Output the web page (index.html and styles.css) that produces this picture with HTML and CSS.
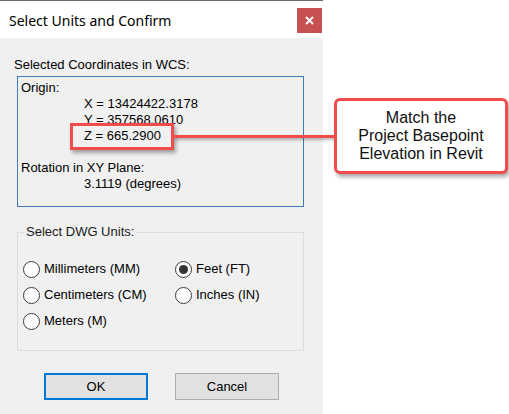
FILE: index.html
```html
<!DOCTYPE html>
<html>
<head>
<meta charset="utf-8">
<link rel="stylesheet" href="styles.css">
</head>
<body>
<div class="page">
  <div class="dialog">
    <div class="titlebar">
      <span class="title">Select Units and Confirm</span>
      <div class="close">
        <svg width="9" height="9" viewBox="0 0 9 9"><path d="M1 1 L8 8 M8 1 L1 8" stroke="#fff" stroke-width="2" fill="none"/></svg>
      </div>
    </div>
    <div class="body">
      <div class="section-label">Selected Coordinates in WCS:</div>
      <div class="coords">
        <div>Origin:</div>
        <div class="indent">X = 13424422.3178</div>
        <div class="indent">Y = 357568.0610</div>
        <div class="indent">Z = 665.2900</div>
        <div class="spacer"></div>
        <div>Rotation in XY Plane:</div>
        <div class="indent">3.1119 (degrees)</div>
      </div>
      <fieldset class="units">
        <legend>Select DWG Units:</legend>
        <div class="radio-grid">
          <label class="radio"><span class="dot"></span>Millimeters (MM)</label>
          <label class="radio"><span class="dot checked"></span>Feet (FT)</label>
          <label class="radio"><span class="dot"></span>Centimeters (CM)</label>
          <label class="radio"><span class="dot"></span>Inches (IN)</label>
          <label class="radio"><span class="dot"></span>Meters (M)</label>
        </div>
      </fieldset>
      <div class="buttons">
        <div class="btn default">OK</div>
        <div class="btn">Cancel</div>
      </div>
    </div>
  </div>
  <div class="highlight"></div>
  <div class="connector"></div>
  <div class="callout">Match the<br>Project Basepoint<br>Elevation in Revit</div>
</div>
</body>
</html>
```
FILE: styles.css
```css
* { box-sizing: border-box; }
html, body { margin: 0; padding: 0; background: #fff; }
body {
  font-family: "Liberation Sans", Arial, sans-serif;
  font-size: 13px;
  color: #000;
}
.page {
  position: relative;
  width: 509px;
  height: 414px;
  overflow: hidden;
}
.dialog {
  width: 323px;
  height: 414px;
  display: flex;
  flex-direction: column;
}
.titlebar {
  height: 38px;
  background: #fff;
  border-top: 1px solid #6e6e6e;
  display: flex;
  align-items: center;
  justify-content: space-between;
  padding-left: 9px;
  padding-top: 1px;
}
.title {
  font-family: "Noto Sans", "Open Sans", sans-serif;
  font-size: 14px;
  color: #000;
}
.close {
  width: 25px;
  height: 25px;
  margin-right: 1px;
  background: #c75050;
  display: flex;
  align-items: center;
  justify-content: center;
}
.body {
  flex: 1;
  background: #f0f0f0;
  padding: 19px 0 0 0;
}
.section-label {
  margin-left: 14px;
  line-height: 16px;
}
.coords {
  margin: 3px 0 0 17px;
  width: 287px;
  height: 131px;
  border: 1px solid #3d7ab8;
  padding: 3px 0 0 3px;
  line-height: 16px;
}
.coords .indent { padding-left: 63px; }
.coords .spacer { height: 16px; }
.units {
  margin: 17px 0 0 17px;
  width: 287px;
  height: 127px;
  border: 1px solid #dcdcdc;
  padding: 0 0 0 5px;
}
.units legend {
  padding: 0 2px;
  margin-left: 1px;
  line-height: 16px;
  color: #1a1a1a;
}
.radio-grid {
  display: grid;
  grid-template-columns: 152px auto;
  row-gap: 8px;
  margin-top: 20px;
}
.radio {
  display: flex;
  align-items: center;
  gap: 4px;
  height: 18px;
  line-height: 18px;
  white-space: nowrap;
}
.dot {
  width: 17px;
  height: 17px;
  border: 1px solid #3a3a3a;
  border-radius: 50%;
  background: #fff;
  display: flex;
  align-items: center;
  justify-content: center;
}
.dot.checked::after {
  content: "";
  width: 9px;
  height: 9px;
  border-radius: 50%;
  background: #333;
}
.buttons {
  display: flex;
  gap: 27px;
  margin: 22px 0 0 44px;
}
.btn {
  width: 104px;
  height: 27px;
  background: #e1e1e1;
  border: 1px solid #adadad;
  display: flex;
  align-items: center;
  justify-content: center;
}
.btn.default { border: 2px solid #0078d7; }
.highlight {
  position: absolute;
  left: 70px;
  top: 123px;
  width: 104px;
  height: 27px;
  border: 3px solid #f24b4b;
  box-shadow: 2px 3px 4px rgba(0,0,0,0.35);
}
.connector {
  position: absolute;
  left: 174px;
  top: 135px;
  width: 162px;
  height: 3px;
  background: #f24b4b;
  box-shadow: 1px 2px 3px rgba(0,0,0,0.3);
}
.callout {
  position: absolute;
  left: 334px;
  top: 98px;
  width: 174px;
  height: 76px;
  border: 3px solid #f24b4b;
  border-radius: 6px;
  background: #fff;
  box-shadow: 2px 3px 4px rgba(0,0,0,0.35);
  font-size: 16px;
  line-height: 18px;
  text-align: center;
  padding-top: 8px;
  color: #111;
}
```
